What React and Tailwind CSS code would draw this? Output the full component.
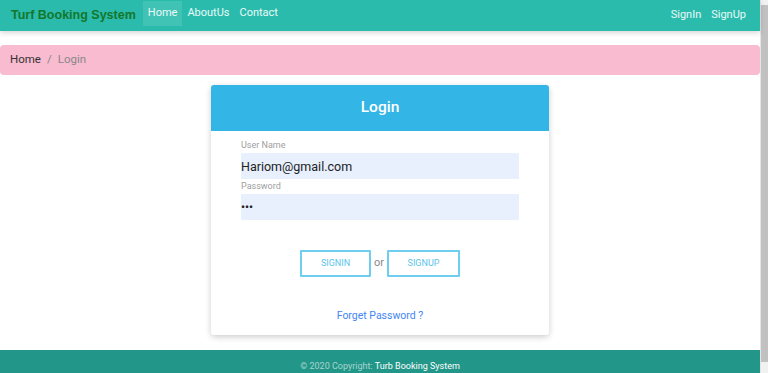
import React from "react";

const navLinks = ["Home", "AboutUs", "Contact"];

const App = () => {
	return (
		<div className="flex h-[373px] overflow-hidden bg-white font-['Roboto',sans-serif]">
			<div className="flex-1 flex flex-col">
				<nav className="h-[31px] shrink-0 bg-[#2bbbad] flex items-center justify-between pl-[11px] pr-[14px] shadow-[0_2px_5px_rgba(0,0,0,0.16)] relative z-10">
					<div className="flex items-center h-full">
						<span className="text-[12.5px] font-bold text-[#13772b] font-['Liberation_Sans',sans-serif] mr-[7px]">
							Turf Booking System
						</span>
						{navLinks.map((link, index) => (
							<a
								key={link}
								href="#"
								className={`text-[11px] text-white/90 px-[5px] h-[25px] mt-[1px] flex items-center self-start ${index === 0 ? "bg-white/10" : ""}`}
							>
								{link}
							</a>
						))}
					</div>
					<div className="flex items-center gap-[10px] text-[11px] text-white/90">
						<a href="#">SignIn</a>
						<a href="#">SignUp</a>
					</div>
				</nav>

				<div className="mt-[14px] h-[30px] shrink-0 bg-[#f8bbd0] rounded-[4px] flex items-center px-[10px] text-[11.5px]">
					<span className="text-[#333]">Home</span>
					<span className="text-[#888] mx-[6px]">/</span>
					<span className="text-[#888]">Login</span>
				</div>

				<div className="flex justify-center mt-[10px] shrink-0">
					<section className="w-[338px] h-[250px] bg-white rounded-[3px] shadow-[0_2px_6px_rgba(0,0,0,0.2)] overflow-hidden flex flex-col">
						<header className="h-[46px] bg-[#33b5e5] flex items-center justify-center">
							<h2 className="text-white text-[15.5px] font-medium">Login</h2>
						</header>
						<form className="px-[30px] pt-[7px] flex flex-col">
							<label className="text-[9px] text-[#9e9e9e] leading-[14px]">User Name</label>
							<input
								readOnly
								value="Hariom@gmail.com"
								className="h-[26px] bg-[#e8f0fe] text-[12.5px] text-[#222] outline-none mt-[1px]"
							/>
							<label className="text-[9px] text-[#9e9e9e] leading-[14px]">Password</label>
							<input
								readOnly
								value="•••"
								className="h-[26px] bg-[#e8f0fe] text-[11px] font-bold text-[#222] outline-none mt-[1px]"
							/>
							<div className="flex justify-center items-center mt-[30px]">
								<button
									type="button"
									className="w-[71px] h-[27px] border-2 border-[#6fcdf0] rounded-[1px] text-[9px] text-[#5cc4ec] uppercase"
								>
									Signin
								</button>
								<span className="text-[11px] text-[#888] mx-[3px]">or</span>
								<button
									type="button"
									className="w-[73px] h-[27px] border-2 border-[#6fcdf0] rounded-[1px] text-[9px] text-[#5cc4ec] uppercase"
								>
									Signup
								</button>
							</div>
							<a href="#" className="text-center text-[10.5px] text-[#4285f4] mt-[31px]">
								Forget Password ?
							</a>
						</form>
					</section>
				</div>

				<footer className="mt-[15px] flex-1 bg-[#229688] flex items-start justify-center pt-[10px] text-[9px]">
					<span className="text-white/60">© 2020 Copyright:&nbsp;</span>
					<span className="text-white">Turb Booking System</span>
				</footer>
			</div>
			<div className="w-[8px] bg-[#f1f1f1] flex flex-col py-[5px] border-l border-[#e5e5e5]">
				<div className="flex-1 bg-[#c1c1c1] mb-[6px]" />
			</div>
		</div>
	);
};

export default App;
